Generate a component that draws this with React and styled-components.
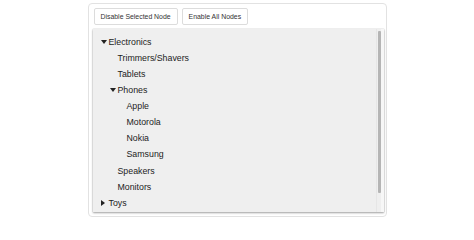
import React from 'react';
import styled, { createGlobalStyle } from 'styled-components';

const GlobalStyle = createGlobalStyle`
    body {
        margin: 0;
        background: #ffffff;
        font-family: "Liberation Sans", Helvetica, Arial, sans-serif;
    }
`;

const Card = styled.div`
    width: 299px;
    box-sizing: border-box;
    margin: 3px auto 0;
    padding: 4px 2px 4px 4px;
    border: 1px solid #e2e2e2;
    border-radius: 4px;
    background: #ffffff;
    display: flex;
    flex-direction: column;
    gap: 4px;
`;

const Toolbar = styled.div`
    display: flex;
    gap: 4px;
    padding-left: 1px;
`;

const Button = styled.button`
    height: 17px;
    padding: 0 6px;
    border: 1px solid #dcdcdc;
    border-radius: 2px;
    background: #ffffff;
    color: #333333;
    font-family: "Liberation Sans", Helvetica, Arial, sans-serif;
    font-size: 6.9px;
    line-height: 15px;
    cursor: pointer;
`;

const Panel = styled.div`
    position: relative;
    height: 183px;
    background: #efefef;
    box-shadow: 0 1px 2px rgba(0, 0, 0, 0.35), 0 0 1px rgba(0, 0, 0, 0.25);
    overflow: hidden;
`;

const Scroller = styled.div`
    height: 100%;
    box-sizing: border-box;
    padding: 4.5px 0 20px;
    overflow-y: auto;
    scrollbar-width: none;
`;

/* overlay scrollbar, as the headless browser hides native ones */
const ScrollTrack = styled.div`
    position: absolute;
    top: 0;
    right: 0;
    bottom: 0;
    width: 7px;
    border-left: 1px solid #e6e6e6;
    background: linear-gradient(to right, #efefef 4px, #f7f7f7 4px);
`;

const ScrollThumb = styled.div`
    position: absolute;
    top: 2px;
    left: 1px;
    width: 3px;
    height: 162px;
    border-radius: 1px;
    background: #b5b5b5;
`;

const List = styled.ul`
    list-style: none;
    margin: 0;
    padding: 0;
`;

const Row = styled.div`
    display: flex;
    align-items: center;
    height: 16.13px;
    padding-left: ${p => 8 + p.$level * 9}px;
    font-size: 8.8px;
    color: #1c1c1c;
    white-space: nowrap;
`;

const Toggle = styled.span`
    width: 8px;
    flex: none;
    display: flex;
    align-items: center;
`;

const Caret = ({ open }) => (
    open ? (
        <svg width="6" height="4" viewBox="0 0 6 4"><path d="M0 0h6L3 4z" fill="#222" /></svg>
    ) : (
        <svg width="4" height="6" viewBox="0 0 4 6"><path d="M0 0v6l4-3z" fill="#222" /></svg>
    )
);

const tree = [
    {
        label: 'Electronics', open: true, children: [
            { label: 'Trimmers/Shavers' },
            { label: 'Tablets' },
            {
                label: 'Phones', open: true, children: [
                    { label: 'Apple' },
                    { label: 'Motorola' },
                    { label: 'Nokia' },
                    { label: 'Samsung' },
                ]
            },
            { label: 'Speakers' },
            { label: 'Monitors' },
        ]
    },
    { label: 'Toys', open: false, children: [{ label: 'Games' }] },
];

function TreeNode({ node, level }) {
    const hasChildren = !!node.children;
    return (
        <li>
            <Row $level={level}>
                <Toggle>{hasChildren && <Caret open={node.open} />}</Toggle>
                {node.label}
            </Row>
            {hasChildren && node.open && (
                <List>
                    {node.children.map(child => (
                        <TreeNode key={child.label} node={child} level={level + 1} />
                    ))}
                </List>
            )}
        </li>
    );
}

function App() {
    return (
        <>
            <GlobalStyle />
            <Card>
                <Toolbar>
                    <Button>Disable Selected Node</Button>
                    <Button>Enable All Nodes</Button>
                </Toolbar>
                <Panel>
                    <Scroller>
                        <List>
                            {tree.map(node => (
                                <TreeNode key={node.label} node={node} level={0} />
                            ))}
                        </List>
                    </Scroller>
                    <ScrollTrack>
                        <ScrollThumb />
                    </ScrollTrack>
                </Panel>
            </Card>
        </>
    );
}

export default App;
